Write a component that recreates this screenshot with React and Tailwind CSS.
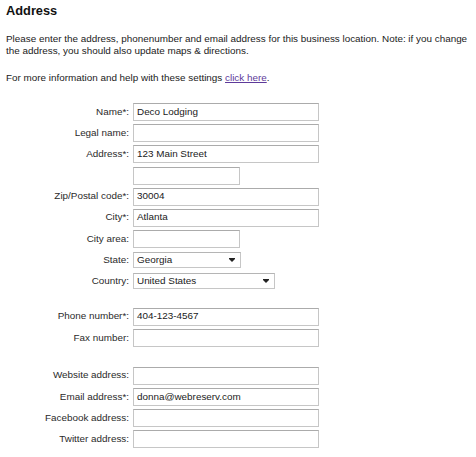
import React from "react";

const font = { fontFamily: '"Liberation Sans", Arial, sans-serif' };

function Row({ label, children, className = "" }) {
  return (
    <div className={"flex items-center h-[18px] " + className}>
      <div className="w-[129px] shrink-0 text-right text-[9.9px] text-[#2a2a2a] whitespace-nowrap">
        {label}
      </div>
      <div className="ml-[4px] flex items-center h-full">{children}</div>
    </div>
  );
}

function Input({ value = "", w = "w-[186px]" }) {
  return (
    <div
      className={
        w +
        " h-[18px] border border-[#c6c6c6] border-t-[#ababab] bg-white flex items-center pl-[3px] text-[9.9px] text-[#1a1a1a] whitespace-nowrap overflow-hidden"
      }
    >
      {value}
    </div>
  );
}

function Select({ value, w }) {
  return (
    <div
      className={
        w +
        " h-[16px] border border-[#c6c6c6] border-t-[#b5b5b5] bg-white flex items-center justify-between pl-[3px] pr-[5px] text-[9.9px] text-[#1a1a1a] whitespace-nowrap"
      }
    >
      <span>{value}</span>
      <svg width="6" height="4" viewBox="0 0 6 4" className="block">
        <rect x="0" y="0" width="6" height="1" fill="#222" />
        <polygon points="0,1 6,1 3,4" fill="#222" />
      </svg>
    </div>
  );
}

export default function App() {
  return (
    <div className="bg-white w-[476px] h-[457px] overflow-hidden pl-[6px]" style={font}>
      <h1 className="text-[12.8px] leading-[15px] font-bold text-[#111] pt-[3px]">Address</h1>
      <p className="mt-[15.4px] w-[466px] text-[9.9px] leading-[11.8px] text-[#1a1a1a]">
        Please enter the address, phonenumber and email address for this business location. Note: if you change
        the address, you should also update maps &amp; directions.
      </p>
      <p className="mt-[15.4px] text-[9.9px] leading-[11.8px] text-[#1a1a1a]">
        For more information and help with these settings{" "}
        <a href="#" className="text-[#5e3a9a] underline">
          click here
        </a>
        .
      </p>
      <div className="mt-[18.8px] -ml-[6px] flex flex-col gap-[3.2px]">
        <Row label="Name*:">
          <Input value="Deco Lodging" />
        </Row>
        <Row label="Legal name:">
          <Input />
        </Row>
        <Row label="Address*:">
          <Input value="123 Main Street" />
        </Row>
        <Row label="">
          <Input w="w-[107px]" />
        </Row>
        <Row label="Zip/Postal code*:">
          <Input value="30004" />
        </Row>
        <Row label="City*:">
          <Input value="Atlanta" />
        </Row>
        <Row label="City area:">
          <Input w="w-[107px]" />
        </Row>
        <Row label="State:">
          <Select value="Georgia" w="w-[108px]" />
        </Row>
        <Row label="Country:">
          <Select value="United States" w="w-[142px]" />
        </Row>
        <Row label="Phone number*:" className="mt-[14.2px]">
          <Input value="404-123-4567" />
        </Row>
        <Row label="Fax number:">
          <Input />
        </Row>
        <Row label="Website address:" className="mt-[16.6px]">
          <Input />
        </Row>
        <Row label="Email address*:">
          <Input value="donna@webreserv.com" />
        </Row>
        <Row label="Facebook address:">
          <Input />
        </Row>
        <Row label="Twitter address:">
          <Input />
        </Row>
      </div>
    </div>
  );
}
